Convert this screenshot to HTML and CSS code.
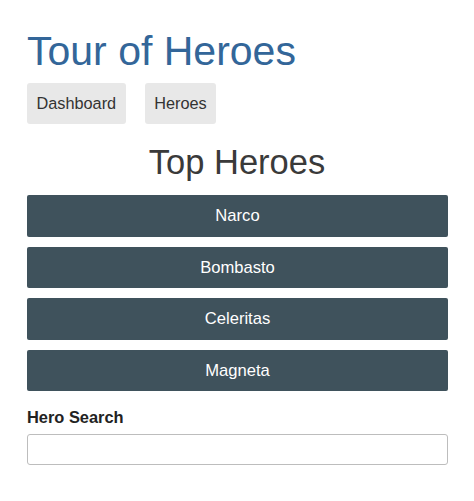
FILE: index.html
```html
<!DOCTYPE html>
<html>
<head>
<meta charset="utf-8">
<title>Tour of Heroes</title>
<link rel="stylesheet" href="styles.css">
</head>
<body>
<div class="app">
  <h1 class="title">Tour of Heroes</h1>
  <nav class="nav">
    <a class="nav-link" href="#">Dashboard</a>
    <a class="nav-link" href="#">Heroes</a>
  </nav>
  <h2 class="top-title">Top Heroes</h2>
  <div class="heroes-menu">
    <a class="hero" href="#">Narco</a>
    <a class="hero" href="#">Bombasto</a>
    <a class="hero" href="#">Celeritas</a>
    <a class="hero" href="#">Magneta</a>
  </div>
  <div class="search">
    <label class="search-label" for="search-box">Hero Search</label>
    <input class="search-box" id="search-box" type="text">
  </div>
</div>
</body>
</html>
```
FILE: styles.css
```css
html, body {
  margin: 0;
  padding: 0;
  background: #fff;
}
body {
  font-family: "Liberation Sans", Arial, sans-serif;
  color: #333;
}
.app {
  padding: 28px 26px 0 27px;
}
.title {
  margin: 0;
  font-size: 41px;
  line-height: 46px;
  font-weight: normal;
  color: #336699;
}
.nav {
  display: flex;
  gap: 19px;
  margin-top: 9px;
}
.nav-link {
  display: block;
  height: 41px;
  line-height: 41px;
  padding: 0 9.5px;
  background: #e8e8e8;
  border-radius: 3px;
  color: #333;
  text-decoration: none;
  font-size: 16.3px;
}
.top-title {
  margin: 19px -26px 0 -27px;
  font-size: 34.5px;
  line-height: 38.5px;
  font-weight: normal;
  color: #3a3a3a;
  text-align: center;
}
.heroes-menu {
  display: flex;
  flex-direction: column;
  gap: 10px;
  margin-top: 13.5px;
}
.hero {
  display: block;
  height: 41.5px;
  line-height: 41.5px;
  background: #3f525c;
  border-radius: 2px;
  color: #fff;
  text-align: center;
  text-decoration: none;
  font-size: 16.6px;
}
.search {
  display: flex;
  flex-direction: column;
  margin-top: 17px;
}
.search-label {
  font-weight: bold;
  font-size: 16.4px;
  line-height: 18.4px;
  color: #222;
}
.search-box {
  margin: 7.6px 0 0 0;
  box-sizing: border-box;
  width: 100%;
  height: 31px;
  border: 1px solid #bdbdbd;
  border-radius: 3px;
  padding: 0 6px;
  font-size: 16px;
  font-family: inherit;
  background: #fff;
}
```
